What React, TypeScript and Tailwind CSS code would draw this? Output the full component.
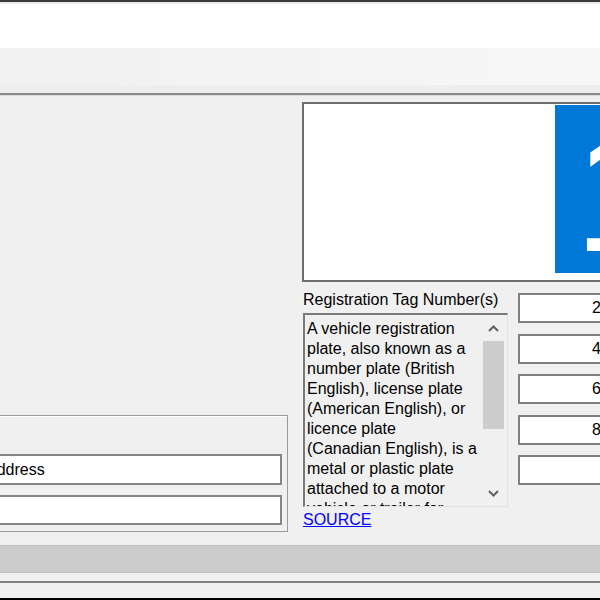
const descLines = [
  "A vehicle registration",
  "plate, also known as a",
  "number plate (British",
  "English), license plate",
  "(American English), or",
  "licence plate",
  "(Canadian English), is a",
  "metal or plastic plate",
  "attached to a motor",
  "vehicle or trailer for",
];

const tagValues = ["2", "4", "6", "8", ""];

function Chevron({ up }: { up?: boolean }) {
  return (
    <svg width="11" height="7" viewBox="0 0 11 7" className="block">
      <path
        d={up ? "M1 6 L5.5 1.5 L10 6" : "M1 1 L5.5 5.5 L10 1"}
        fill="none"
        stroke="#606060"
        strokeWidth="2"
      />
    </svg>
  );
}

export default function App() {
  return (
    <div className="w-[600px] h-[600px] overflow-hidden bg-[#f0f0f0] font-['Liberation_Sans',Arial,sans-serif] text-[16px] leading-[20px] text-black flex flex-col">
      {/* window chrome */}
      <div className="h-[2px] shrink-0 bg-[#3a3a3a]" />
      <div className="h-[2px] shrink-0 bg-[#ececec]" />
      <div className="h-[44px] shrink-0 bg-white" />
      <div className="h-[37px] shrink-0 bg-gradient-to-r from-[#f1f1f1] to-[#f7f7f7]" />
      <div className="h-[8px] shrink-0 bg-[#eeeeee]" />
      <div className="h-[2px] shrink-0 bg-[#8c8c8c]" />
      <div className="h-[1px] shrink-0 bg-[#dadada]" />

      <div className="h-[449px] shrink-0 flex">
        {/* left column, cut by the window edge */}
        <div className="-ml-[25px] w-[313px] shrink-0 pt-[319px]">
          <div className="h-[117px] border border-[#9a9a9a] shadow-[inset_1px_1px_0_#ffffff] px-[5px] pt-[38px] flex flex-col gap-[10px]">
            <div className="h-[31px] border-2 border-[#858585] bg-white flex items-center pl-[3px] whitespace-nowrap">
              Address
            </div>
            <div className="h-[30px] border-2 border-[#858585] bg-white" />
          </div>
        </div>

        {/* right column */}
        <div className="ml-[14px] w-[320px] shrink-0 flex flex-col">
          <div className="mt-[6px] h-[180px] border-2 border-r-0 border-[#6e6e6e] bg-white flex">
            <div className="ml-[251px] mt-[1px] h-[168px] w-[80px] bg-[#0078d7] relative overflow-hidden">
              <span className="absolute left-[19px] top-[2px] text-white font-['Liberation_Sans',Arial,sans-serif] text-[170px] leading-[170px]">
                1
              </span>
            </div>
          </div>

          <div className="flex">
            <div className="ml-[1px] w-[205px] shrink-0 flex flex-col">
              <div className="mt-[8px] whitespace-nowrap">Registration Tag Number(s)</div>
              <div className="mt-[3px] h-[194px] border-t-2 border-l-2 border-[#7a7a7a] border-b border-r border-b-[#e3e3e3] border-r-[#e3e3e3] flex overflow-hidden">
                <div className="flex-1 pl-[2px] pt-[4px] overflow-hidden">
                  {descLines.map((l) => (
                    <div key={l} className="whitespace-nowrap">
                      {l}
                    </div>
                  ))}
                </div>
                <div className="w-[25px] shrink-0 flex flex-col items-center pr-[2px]">
                  <div className="h-[26px] flex items-center justify-center">
                    <Chevron up />
                  </div>
                  <div className="w-[21px] h-[88px] bg-[#cdcdcd]" />
                  <div className="flex-1" />
                  <div className="h-[26px] flex items-center justify-center">
                    <Chevron />
                  </div>
                </div>
              </div>
              <a href="#" className="mt-[3px] text-[#0000ff] underline self-start">
                SOURCE
              </a>
            </div>

            <div className="ml-[10px] mt-[11px] w-[90px] shrink-0 flex flex-col gap-[10.5px]">
              {tagValues.map((v, i) => (
                <div
                  key={i}
                  className="h-[30px] border-2 border-[#7f7f7f] bg-white flex items-center justify-end pr-[5px]"
                >
                  {v}
                </div>
              ))}
            </div>
          </div>
        </div>
      </div>

      {/* status strip */}
      <div className="h-[28px] shrink-0 bg-[#cccccc] border-t border-b border-[#bdbdbd]" />
      <div className="h-[8px] shrink-0" />
      <div className="h-[2px] shrink-0 bg-[#7f7f7f]" />
      <div className="h-[15px] shrink-0" />
      <div className="h-[2px] shrink-0 bg-black" />
    </div>
  );
}
